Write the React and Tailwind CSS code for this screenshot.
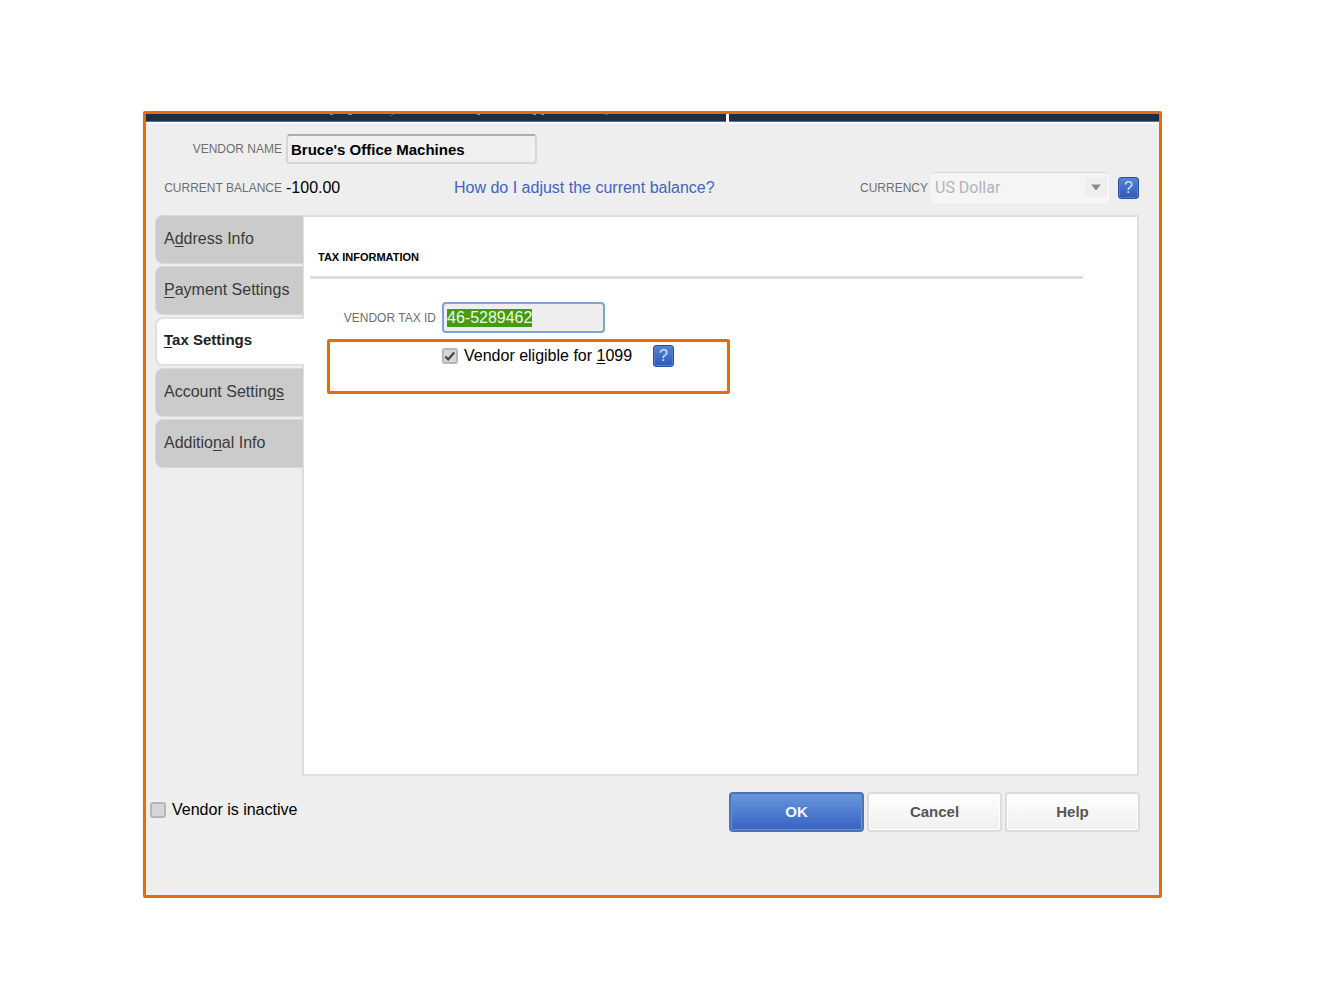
import { useEffect, useRef, useState } from 'react';

const tabs = [
  { id: 'address', before: 'A', key: 'd', after: 'dress Info' },
  { id: 'payment', before: '', key: 'P', after: 'ayment Settings' },
  { id: 'tax', before: '', key: 'T', after: 'ax Settings' },
  { id: 'account', before: 'Account Setting', key: 's', after: '' },
  { id: 'additional', before: 'Additio', key: 'n', after: 'al Info' },
];

function HelpButton({ label }) {
  return (
    <button
      type="button"
      aria-label={label}
      className="flex h-[22px] w-[21px] shrink-0 items-center justify-center rounded-[3px] border border-[#2b4f96] bg-linear-to-b from-[#5585d3] to-[#2f57bb] text-base leading-5 text-[#d5e2f8] shadow-[inset_0_0_0_1px_#5482d0]"
    >
      ?
    </button>
  );
}

function CheckBox({ id, checked, onChange }) {
  return (
    <span className="relative flex h-4 w-4 shrink-0">
      <input
        id={id}
        type="checkbox"
        checked={checked}
        onChange={(e) => onChange(e.target.checked)}
        className="h-4 w-4 appearance-none rounded-[3px] border-2 border-[#b6b6b6] bg-[#d6d6d6]"
      />
      {checked && (
        <svg viewBox="0 0 16 16" className="pointer-events-none absolute inset-0 h-4 w-4">
          <path d="M3.4 8.4 L6.2 11.4 L12.2 4.6" fill="none" stroke="#444444" strokeWidth="2.2" />
        </svg>
      )}
    </span>
  );
}

function TitleStrip() {
  return (
    <div className="relative flex h-[10px] gap-[3px] border-b-2 border-[#fafafa] bg-white">
      <div className="w-[580px] border-b border-[#5f6f80] bg-[#1a2f47]" />
      <div className="flex-1 border-b border-[#5f6f80] bg-[#1a2f47]" />
      {/* tails of the letters cut off by the window edge */}
      <svg viewBox="0 0 480 2" className="absolute top-0 left-0 h-[2px] w-[480px]">
        <path
          d="M184 0.5h3M202 0.5h4M331 0.5h3M387 0.5h3M395 0.5h3"
          stroke="#8794a2"
          strokeWidth="1"
          fill="none"
        />
        <path d="M244 1.5h2M246 0.5h2M459 0.5h3" stroke="#50606f" strokeWidth="1" fill="none" />
      </svg>
    </div>
  );
}

export default function App() {
  const [activeTab, setActiveTab] = useState('tax');
  const [name, setName] = useState("Bruce's Office Machines");
  const [taxId, setTaxId] = useState('46-5289462');
  const [eligible, setEligible] = useState(true);
  const [inactive, setInactive] = useState(false);
  const taxRef = useRef(null);

  useEffect(() => {
    taxRef.current.focus();
    taxRef.current.select();
  }, []);

  return (
    <div className="min-h-screen bg-white pt-[111px] pr-[182px] pb-[110px] pl-[143px] font-['Liberation_Sans',Arial,sans-serif] text-base text-black">
      <main className="rounded-[2px] border-3 border-[#e46c0a] bg-[#eeeeee]">
        <TitleStrip />

        <div className="flex items-center gap-1 pt-[10px]">
          <label htmlFor="vendor-name" className="w-[136px] text-right text-xs text-[#6e6e6e]">
            VENDOR NAME
          </label>
          <input
            id="vendor-name"
            value={name}
            onChange={(e) => setName(e.target.value)}
            className="h-[30px] w-[251px] rounded-[4px] border-2 border-[#d6d6d6] border-t-[#adadad] bg-[#f0f0f0] px-[3px] text-[15px] font-bold outline-none"
          />
        </div>

        <div className="flex items-center pt-2 pr-5">
          <span className="w-[136px] pt-px text-right text-xs text-[#6e6e6e]">CURRENT BALANCE</span>
          <span className="ml-1 w-[168px] pt-px">-100.00</span>
          <a href="#balance" className="pt-px text-[#4263c8]">
            How do I adjust the current balance?
          </a>
          <label htmlFor="currency" className="ml-auto pt-px text-xs text-[#6e6e6e]">
            CURRENCY
          </label>
          <div className="relative ml-[3px] w-[178px]">
            <select
              id="currency"
              disabled
              className="h-[31px] w-full appearance-none rounded-[4px] border border-[#f8f8f8] border-t-[#d8d8d8] bg-[#f5f5f5] px-[3px] font-[Roboto,sans-serif] text-[#b2b4b8] opacity-100"
            >
              <option>US Dollar</option>
            </select>
            <span className="pointer-events-none absolute top-[5px] right-[2px] flex h-5 w-[22px] items-center justify-center bg-[#efefef]">
              <svg viewBox="0 0 10 7" className="h-[7px] w-[10px]">
                <path d="M0 0.5h10L5 6.5z" fill="#8c8c8c" />
              </svg>
            </span>
          </div>
          <span className="ml-[9px]">
            <HelpButton label="Currency help" />
          </span>
        </div>

        <div className="flex pt-3 pr-5 pl-[9px]">
          <nav className="flex w-[147px] shrink-0 flex-col gap-[2px]">
            {tabs.map((tab) => {
              const active = tab.id === activeTab;
              return (
                <button
                  key={tab.id}
                  type="button"
                  onClick={() => setActiveTab(tab.id)}
                  className={
                    active
                      ? 'relative z-10 -mr-[2px] h-[49px] rounded-l-[8px] border-2 border-r-0 border-[#e0e0e0] bg-white px-[7px] pb-[2px] text-left text-[15px] font-bold text-[#222222]'
                      : 'relative z-10 -mr-[1px] h-[49px] rounded-l-[8px] border border-r-0 border-[#d8d8d8] bg-[#cbcbcb] px-2 pb-[1px] text-left text-[#3a3a3a]'
                  }
                >
                  {tab.before}
                  <span className="underline underline-offset-2">{tab.key}</span>
                  {tab.after}
                </button>
              );
            })}
          </nav>

          <section className="min-h-[561px] flex-1 border-2 border-[#dfdfdf] bg-white pt-[30px]">
            <h2 className="mr-[54px] ml-[6px] border-b-3 border-[#dddddd] px-2 pb-[9px] text-[11px] leading-5 font-bold">
              TAX INFORMATION
            </h2>

            <div className="mt-[23px] flex items-center gap-[6px]">
              <label htmlFor="tax-id" className="w-[132px] text-right text-xs text-[#6e6e6e]">
                VENDOR TAX ID
              </label>
              <input
                id="tax-id"
                ref={taxRef}
                value={taxId}
                onChange={(e) => setTaxId(e.target.value)}
                className="h-[31px] w-[163px] rounded-[4px] border-2 border-[#7da2dc] bg-[#eeeeee] px-[3px] leading-5 outline-none selection:bg-[#469b12] selection:text-[#eef8e6]"
              />
            </div>

            <div className="mt-[6px] ml-[23px] flex h-[55px] w-[403px] items-start rounded-[2px] border-3 border-[#e46c0a] pl-[112px]">
              <div className="flex h-7 items-center">
                <CheckBox id="eligible" checked={eligible} onChange={setEligible} />
                <label htmlFor="eligible" className="w-[195px] pl-[6px]">
                  Vendor eligible for <span className="underline underline-offset-2">1</span>099
                </label>
                <HelpButton label="1099 help" />
              </div>
            </div>
          </section>
        </div>

        <div className="flex items-start gap-[6px] pt-4 pr-[19px] pb-[63px] pl-1">
          <div className="flex h-9 items-center gap-[6px]">
            <CheckBox id="inactive" checked={inactive} onChange={setInactive} />
            <label htmlFor="inactive">Vendor is inactive</label>
          </div>
          <div className="ml-auto flex gap-[3px] text-[15px] font-bold text-[#555555]">
            <button
              type="button"
              className="h-10 w-[135px] rounded-[4px] border-2 border-[#4f72b4] bg-linear-to-b from-[#6797da] to-[#3a61c3] text-[#f0f5ff] shadow-[inset_0_0_0_1px_#6690d8]"
            >
              OK
            </button>
            <button
              type="button"
              className="h-10 w-[135px] rounded-[4px] border-2 border-[#dcdcdc] bg-linear-to-b from-white to-[#efefef] shadow-[inset_0_0_0_1px_#ffffff]"
            >
              Cancel
            </button>
            <button
              type="button"
              className="h-10 w-[135px] rounded-[4px] border-2 border-[#dcdcdc] bg-linear-to-b from-white to-[#efefef] shadow-[inset_0_0_0_1px_#ffffff]"
            >
              Help
            </button>
          </div>
        </div>
      </main>
    </div>
  );
}
